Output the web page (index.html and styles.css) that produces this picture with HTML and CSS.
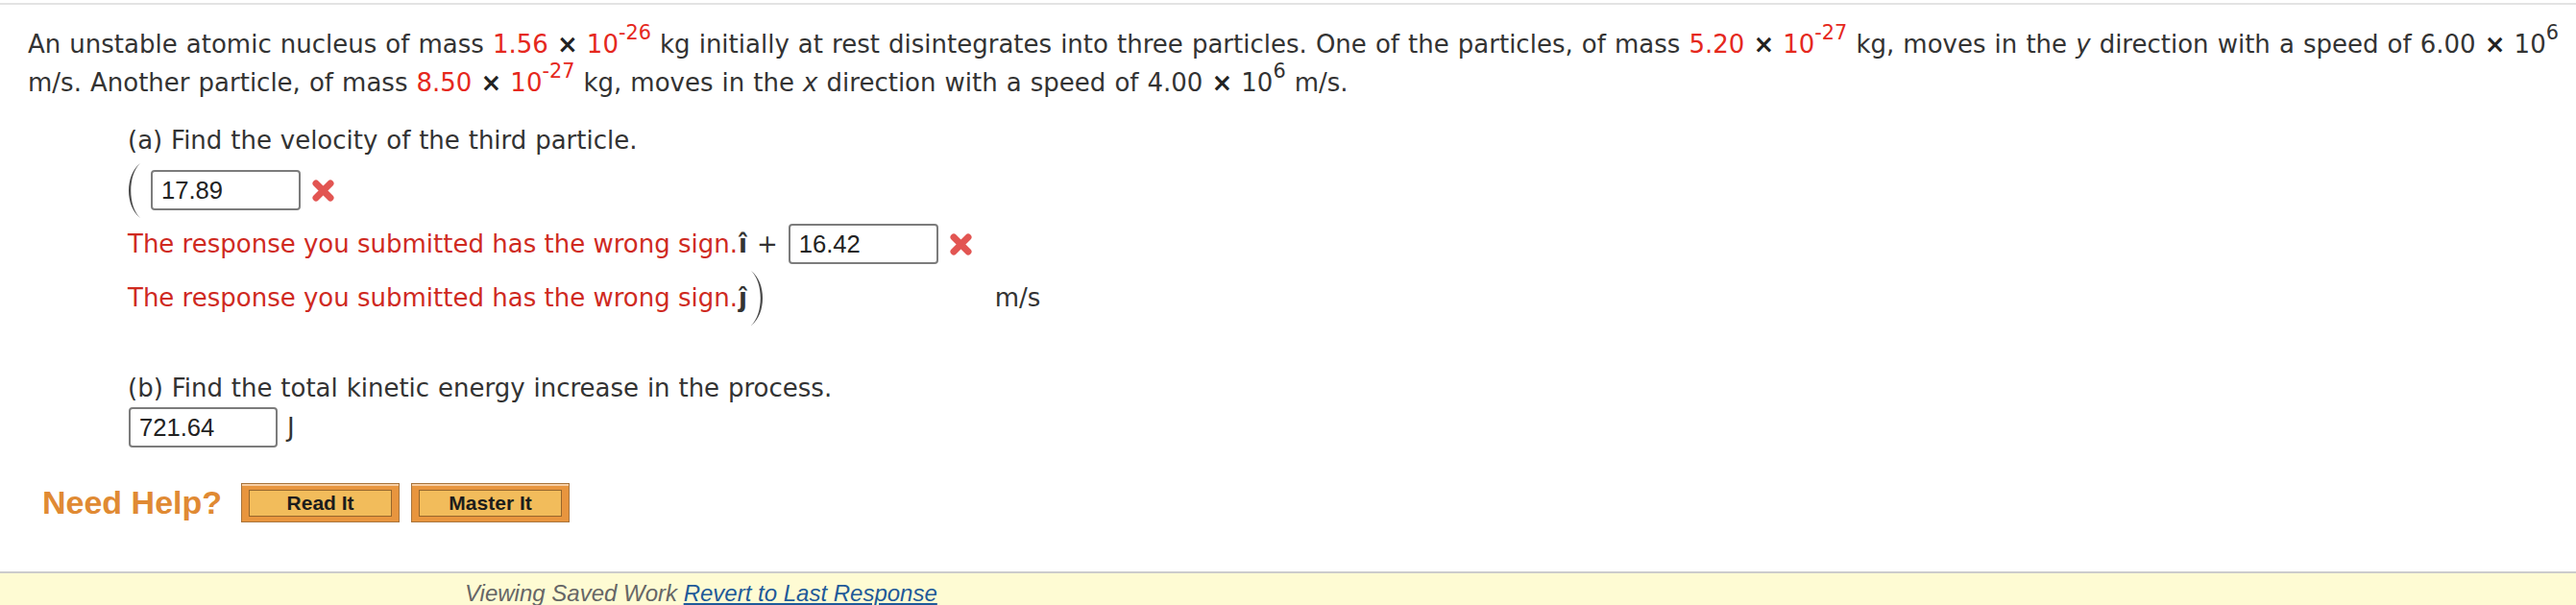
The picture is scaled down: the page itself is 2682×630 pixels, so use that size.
FILE: index.html
```html
<!DOCTYPE html>
<html lang="en">
<head>
<meta charset="utf-8">
<title>Question</title>
<link rel="stylesheet" href="styles.css">
</head>
<body>
<div class="question">
  <p class="prompt">An unstable atomic nucleus of mass <span class="num">1.56</span> <b class="times">×</b> <span class="num">10<sup>-26</sup></span> kg initially at rest disintegrates into three particles. One of the particles, of mass <span class="num">5.20</span> <b class="times">×</b> <span class="num">10<sup>-27</sup></span> kg, moves in the <i>y</i> direction with a speed of 6.00 <b class="times">×</b> 10<sup>6</sup> m/s. Another particle, of mass <span class="num">8.50</span> <b class="times">×</b> <span class="num">10<sup>-27</sup></span> kg, moves in the <i>x</i> direction with a speed of 4.00 <b class="times">×</b> 10<sup>6</sup> m/s.</p>

  <div class="part part-a">
    <p class="part-q">(a) Find the velocity of the third particle.</p>
    <div class="vector-answer">
      <div class="vector">
        <div class="vrow">
          <svg class="paren" viewBox="0 0 15 57"><path d="M13 0 C-3 12 -3 45 13 57 C0 45 0 12 13 0 Z" fill="#4a4a4a"/></svg>
          <input class="field" type="text" value="17.89" readonly>
          <svg class="xmark" viewBox="0 0 27 27"><path d="M6 6 L21 21 M21 6 L6 21" stroke="#e25552" stroke-width="7" stroke-linecap="round"/></svg>
        </div>
        <div class="vrow">
          <span class="err">The response you submitted has the wrong sign.</span><b class="uvec">î</b><span class="plus">+</span>
          <input class="field field-i" type="text" value="16.42" readonly>
          <svg class="xmark" viewBox="0 0 27 27"><path d="M6 6 L21 21 M21 6 L6 21" stroke="#e25552" stroke-width="7" stroke-linecap="round"/></svg>
        </div>
        <div class="vrow">
          <span class="err">The response you submitted has the wrong sign.</span><b class="uvec">ĵ</b>
          <svg class="paren paren-r" viewBox="0 0 15 57"><path d="M2 0 C18 12 18 45 2 57 C15 45 15 12 2 0 Z" fill="#4a4a4a"/></svg>
        </div>
      </div>
      <span class="unit unit-ms">m/s</span>
    </div>
  </div>

  <div class="part part-b">
    <p class="part-q">(b) Find the total kinetic energy increase in the process.</p>
    <div class="answer-row">
      <input class="field field-b" type="text" value="721.64" readonly>
      <span class="unit">J</span>
    </div>
  </div>

  <div class="help">
    <span class="help-label">Need Help?</span>
    <span class="btn"><span class="btn-inner">Read It</span></span>
    <span class="btn"><span class="btn-inner">Master It</span></span>
  </div>
</div>

<div class="saved-bar">
  <span class="saved-text">Viewing Saved Work</span> <a class="revert" href="#">Revert to Last Response</a>
</div>
</body>
</html>
```

FILE: styles.css
```css
html, body {
  margin: 0;
  padding: 0;
  overflow: hidden;
  background: #fff;
}

body {
  font-family: "DejaVu Sans", Verdana, sans-serif;
  font-size: 26px;
  word-spacing: 0.6px;
  color: #333;
}

.question {
  margin-top: 3px;
  border-top: 2px solid #e3e3e3;
  padding: 0 18px 0 29px;
}

.prompt {
  margin: 21px 0 0;
  line-height: 40px;
  text-align: justify;
  word-spacing: 0.8px;
}

.prompt sup {
  font-size: 0.8em;
  line-height: 0;
  vertical-align: 0.66em;
}

.num {
  color: #e5281d;
}

.times {
  color: #222;
  font-weight: bold;
}

.part {
  margin-left: 104px;
}

.part-a {
  margin-top: 20px;
}

.part-b {
  margin-top: 46px;
}

.part-q {
  margin: 0;
  line-height: 40px;
}

.vector-answer {
  display: flex;
  align-items: flex-end;
  margin-top: 4px;
}

.vector {
  display: flex;
  flex-direction: column;
}

.vrow {
  display: flex;
  align-items: center;
  height: 56px;
  white-space: nowrap;
}

.paren {
  width: 15px;
  height: 57px;
  flex: none;
}

.paren-r {
  margin-left: 2px;
}

.field {
  box-sizing: border-box;
  width: 156px;
  height: 42px;
  margin: 0 0 0 9px;
  padding: 0 9px;
  border: 2px solid #7c7c7c;
  border-radius: 4px;
  background: #fff;
  font-family: "Liberation Sans", Arial, sans-serif;
  font-size: 25.6px;
  word-spacing: 0;
  color: #222;
  outline: none;
}

.field-i {
  margin-left: 11px;
}

.xmark {
  width: 27px;
  height: 27px;
  margin-left: 10px;
  flex: none;
}

.err {
  color: #cf2a1f;
  word-spacing: 0;
}

.uvec {
  color: #333;
  margin-left: 1px;
}

.plus {
  margin-left: 10px;
}

.unit-ms {
  display: flex;
  align-items: center;
  height: 56px;
  margin-left: 22px;
}

.answer-row {
  display: flex;
  align-items: center;
  height: 42px;
}

.field-b {
  width: 155px;
  margin-left: 1px;
}

.answer-row .unit {
  margin-left: 10px;
}

.help {
  display: flex;
  align-items: center;
  height: 41px;
  margin: 37px 0 0 15px;
  word-spacing: 0;
}

.help-label {
  font-family: "Liberation Sans", Arial, sans-serif;
  font-weight: bold;
  font-size: 34px;
  color: #e08a33;
  margin-right: 20px;
}

.btn {
  box-sizing: border-box;
  display: flex;
  width: 165px;
  height: 41px;
  padding: 6px 7px 5px 7px;
  border: 1px solid #a8743c;
  background: #e8953e;
  box-shadow: inset 0 2px 0 #f7cfa6;
  margin-right: 12px;
}

.btn-inner {
  flex: 1;
  display: flex;
  align-items: center;
  justify-content: center;
  border: 1px solid #96662c;
  background: #f2bc5b;
  font-family: "Liberation Sans", Arial, sans-serif;
  font-weight: bold;
  font-size: 21px;
  color: #1c1c1c;
}

.saved-bar {
  box-sizing: border-box;
  margin-top: 51px;
  height: 37px;
  border-top: 2px solid #cccccc;
  background: #fefbd3;
  padding: 7px 0 0 484px;
  font-family: "Liberation Sans", Arial, sans-serif;
  font-size: 24px;
  font-style: italic;
  word-spacing: 0;
  white-space: nowrap;
  overflow: hidden;
}

.saved-text {
  color: #666;
}

.revert {
  color: #1f5a99;
  text-decoration: underline;
}
```
